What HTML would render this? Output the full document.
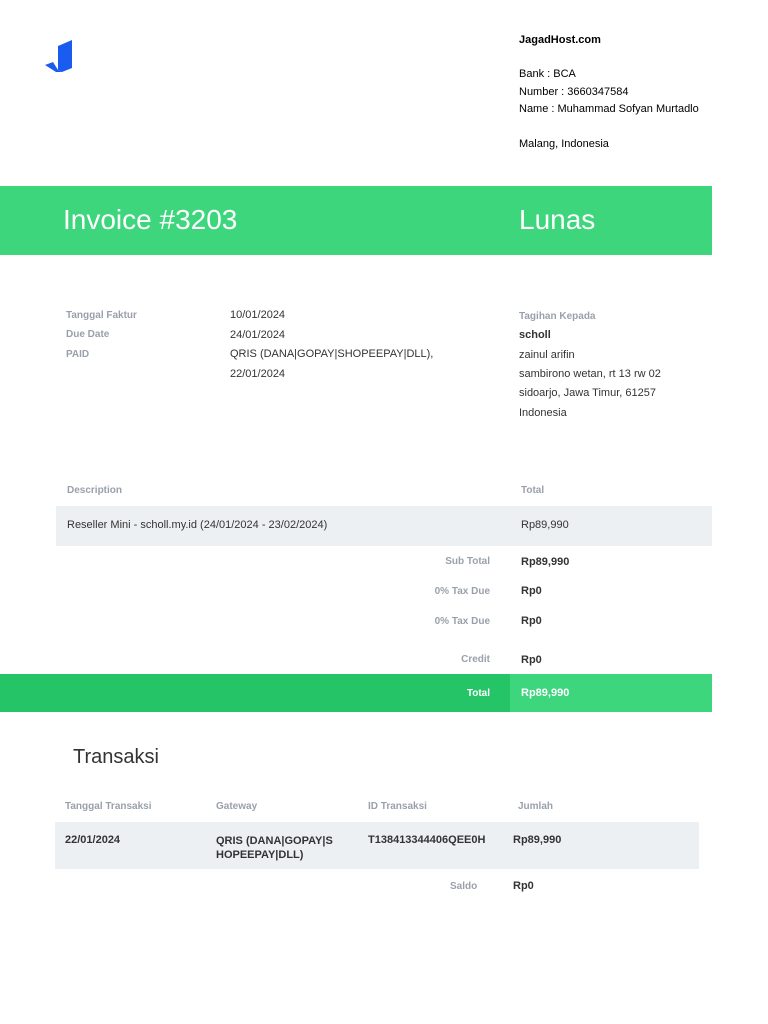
<!DOCTYPE html>
<html><head><meta charset="utf-8"><style>
*{margin:0;padding:0;box-sizing:border-box}
body{width:768px;height:1024px;background:#fff;font-family:"Liberation Sans",sans-serif;color:#333;position:relative;overflow:hidden}
.a{position:absolute;white-space:nowrap}
.lbl,.v{margin-top:1px}
.lbl{font-size:10px;font-weight:bold;color:#9aa0ab}
.v{font-size:11px;color:#333}
.b{font-weight:bold}
.t{font-size:28px;color:#fff;margin-top:1px}
</style></head><body>
<svg class="a" style="left:44px;top:38px" width="32" height="36" viewBox="0 0 32 36">
<polygon points="14,8 28,2 28,30 18,34 14,32" fill="#1a5cf0"/>
<polygon points="1,27 9,24 14,32 18,34 12,34" fill="#1a5cf0"/>
</svg>
<div class="a v b" style="left:519px;top:33px;color:#000">JagadHost.com</div>
<div class="a v" style="left:519px;top:67px;color:#000">Bank : BCA</div>
<div class="a v" style="left:519px;top:85px;color:#000">Number : 3660347584</div>
<div class="a v" style="left:519px;top:102px;color:#000">Name : Muhammad Sofyan Murtadlo</div>
<div class="a v" style="left:519px;top:137px;color:#000">Malang, Indonesia</div>

<div class="a" style="left:0;top:186px;width:712px;height:69px;background:#3dd67c"></div>
<div class="a t" style="left:63px;top:203px">Invoice #3203</div>
<div class="a t" style="left:519px;top:203px">Lunas</div>

<div class="a lbl" style="left:66px;top:309px">Tanggal Faktur</div>
<div class="a lbl" style="left:66px;top:328px">Due Date</div>
<div class="a lbl" style="left:66px;top:348px">PAID</div>
<div class="a v" style="left:230px;top:308px">10/01/2024</div>
<div class="a v" style="left:230px;top:328px">24/01/2024</div>
<div class="a v" style="left:230px;top:347px">QRIS (DANA|GOPAY|SHOPEEPAY|DLL),</div>
<div class="a v" style="left:230px;top:367px">22/01/2024</div>
<div class="a lbl" style="left:519px;top:310px">Tagihan Kepada</div>
<div class="a v b" style="left:519px;top:328px">scholl</div>
<div class="a v" style="left:519px;top:348px">zainul arifin</div>
<div class="a v" style="left:519px;top:367px">sambirono wetan, rt 13 rw 02</div>
<div class="a v" style="left:519px;top:386px">sidoarjo, Jawa Timur, 61257</div>
<div class="a v" style="left:519px;top:406px">Indonesia</div>

<div class="a lbl" style="left:67px;top:484px">Description</div>
<div class="a lbl" style="left:521px;top:484px">Total</div>
<div class="a" style="left:56px;top:506px;width:656px;height:40px;background:#edf0f3"></div>
<div class="a v" style="left:67px;top:518px">Reseller Mini - scholl.my.id (24/01/2024 - 23/02/2024)</div>
<div class="a v" style="left:521px;top:518px">Rp89,990</div>
<div class="a lbl" style="right:278px;top:555px">Sub Total</div>
<div class="a v b" style="left:521px;top:555px">Rp89,990</div>
<div class="a lbl" style="right:278px;top:585px">0% Tax Due</div>
<div class="a v b" style="left:521px;top:584px">Rp0</div>
<div class="a lbl" style="right:278px;top:615px">0% Tax Due</div>
<div class="a v b" style="left:521px;top:614px">Rp0</div>
<div class="a lbl" style="right:278px;top:653px">Credit</div>
<div class="a v b" style="left:521px;top:653px">Rp0</div>
<div class="a" style="left:0;top:674px;width:510px;height:38px;background:#25c466"></div>
<div class="a" style="left:510px;top:674px;width:202px;height:38px;background:#3dd67c"></div>
<div class="a lbl" style="right:278px;top:687px;color:#fff">Total</div>
<div class="a v b" style="left:521px;top:686px;color:#fff">Rp89,990</div>

<div class="a" style="left:73px;top:746px;font-size:20px;color:#333">Transaksi</div>
<div class="a lbl" style="left:65px;top:800px">Tanggal Transaksi</div>
<div class="a lbl" style="left:216px;top:800px">Gateway</div>
<div class="a lbl" style="left:368px;top:800px">ID Transaksi</div>
<div class="a lbl" style="left:518px;top:800px">Jumlah</div>
<div class="a" style="left:55px;top:822px;width:644px;height:47px;background:#edf0f3"></div>
<div class="a v b" style="left:65px;top:833px">22/01/2024</div>
<div class="a v b" style="left:216px;top:833px;line-height:14px">QRIS (DANA|GOPAY|S<br>HOPEEPAY|DLL)</div>
<div class="a v b" style="left:368px;top:833px">T138413344406QEE0H</div>
<div class="a v b" style="left:513px;top:833px">Rp89,990</div>
<div class="a lbl" style="left:450px;top:880px">Saldo</div>
<div class="a v b" style="left:513px;top:879px">Rp0</div>
</body></html>
